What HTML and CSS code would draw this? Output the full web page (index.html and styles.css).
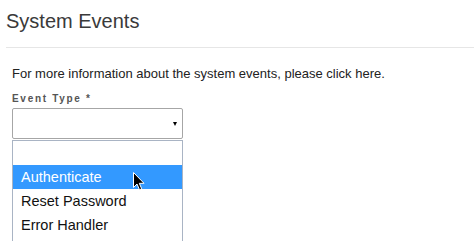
FILE: index.html
```html
<!DOCTYPE html>
<html>
<head>
<meta charset="utf-8">
<link rel="stylesheet" href="styles.css">
</head>
<body>
<div class="page">
  <h1 class="title">System Events</h1>
  <hr class="rule">
  <div class="content">
    <p class="info">For more information about the system events, please click here.</p>
    <div class="label">Event Type *</div>
    <div class="select-wrap">
      <div class="select">
        <span class="arrow"></span>
      </div>
      <ul class="options">
        <li class="opt"></li>
        <li class="opt selected">Authenticate</li>
        <li class="opt">Reset Password</li>
        <li class="opt">Error Handler</li>
      </ul>
      <svg class="cursor" width="12" height="19" viewBox="0 0 12 19">
        <path d="M0.5 0.5 L0.5 15.5 L4 12 L6.5 17.8 L8.7 16.8 L6.3 11.3 L11 11.3 Z" fill="#000" stroke="#fff" stroke-width="1" stroke-linejoin="miter"/>
      </svg>
    </div>
  </div>
</div>
</body>
</html>
```
FILE: styles.css
```css
html, body {
  margin: 0;
  padding: 0;
  background: #fff;
}
body {
  font-family: "Liberation Sans", Arial, sans-serif;
  color: #333;
  overflow: hidden;
  width: 474px;
  height: 241px;
}
.page {
  padding-top: 9px;
}
.title {
  margin: 0 0 0 6px;
  font-size: 20px;
  line-height: 24px;
  font-weight: normal;
  color: #3a3a3a;
}
.rule {
  margin: 14px 0 0 6px;
  border: 0;
  height: 1px;
  background: #e6e6e6;
}
.content {
  padding-left: 12px;
}
.info {
  margin: 18px 0 0 0;
  font-size: 13px;
  line-height: 16px;
  color: #222;
}
.label {
  margin-top: 11px;
  font-size: 10px;
  line-height: 12px;
  font-weight: bold;
  letter-spacing: 1.7px;
  color: #555;
}
.select-wrap {
  position: relative;
  margin-top: 3px;
  width: 171px;
}
.select {
  height: 29px;
  border: 1px solid #a6a6a6;
  border-radius: 2px;
  background: #fff;
  display: flex;
  justify-content: flex-end;
  align-items: center;
  padding-right: 5px;
}
.arrow {
  width: 0;
  height: 0;
  border-left: 2.5px solid transparent;
  border-right: 2.5px solid transparent;
  border-top: 4px solid #000;
  margin-top: 1px;
}
.options {
  list-style: none;
  margin: 1px 0 0 0;
  padding: 0;
  border: 1px solid #a9b4c4;
  border-bottom: 0;
  height: 100px;
}
.opt {
  height: 24px;
  line-height: 24px;
  padding-left: 8px;
  font-size: 14.5px;
  color: #111;
}
.opt.selected {
  background: #3399ff;
  color: #fff;
}
.cursor {
  position: absolute;
  left: 121px;
  top: 64px;
}
```
